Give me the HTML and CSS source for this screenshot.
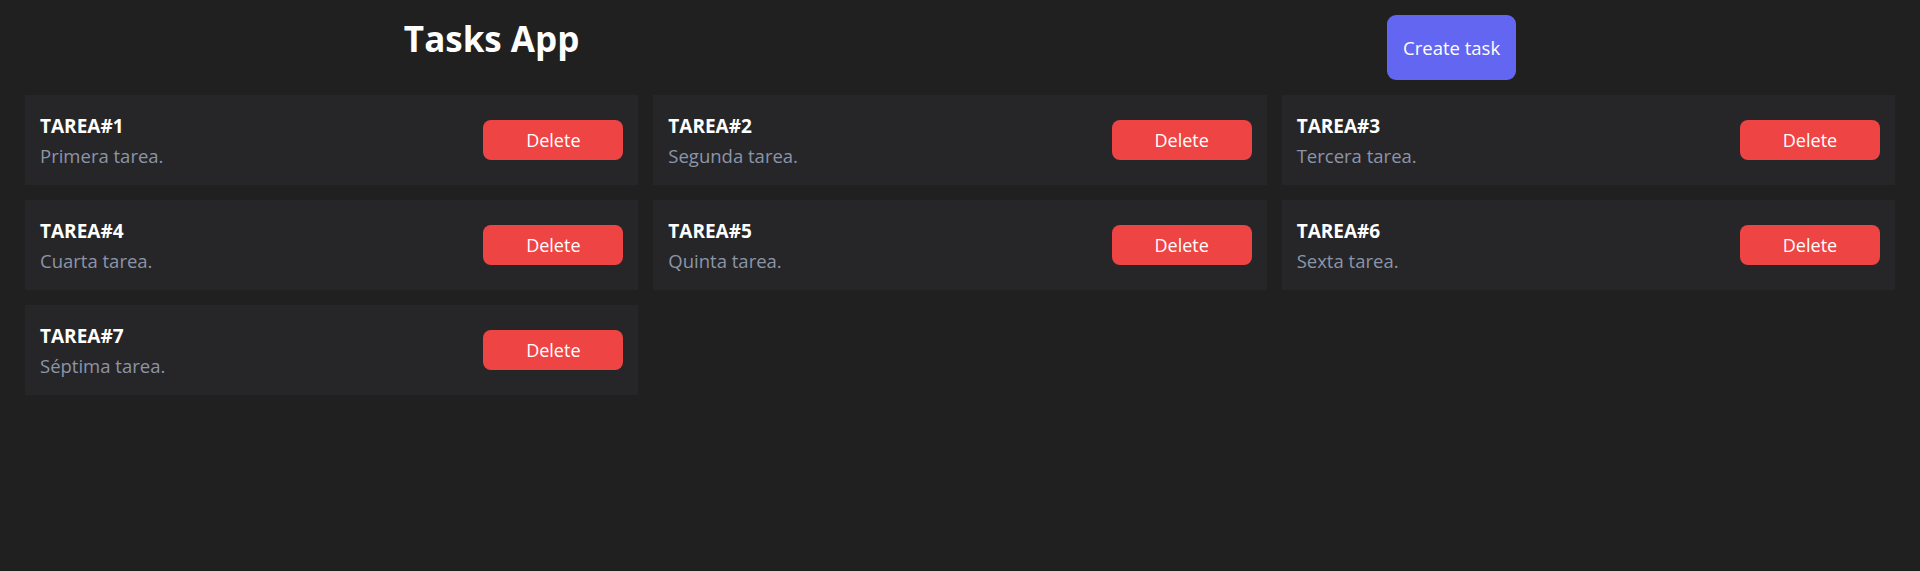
FILE: index.html
```html
<!DOCTYPE html>
<html lang="en">
<head>
  <meta charset="UTF-8">
  <meta name="viewport" content="width=device-width, initial-scale=1.0">
  <title>Tasks App</title>
  <link rel="stylesheet" href="styles.css">
</head>
<body>

  <header class="header">
    <h1 class="title">Tasks App</h1>
    <button class="btn-create">Create task</button>
  </header>

  <main class="task-grid">
    <div class="task-card">
      <div class="task-info">
        <h3 class="task-title">TAREA#1</h3>
        <p class="task-desc">Primera tarea.</p>
      </div>
      <button class="btn-delete">Delete</button>
    </div>
    <div class="task-card">
      <div class="task-info">
        <h3 class="task-title">TAREA#2</h3>
        <p class="task-desc">Segunda tarea.</p>
      </div>
      <button class="btn-delete">Delete</button>
    </div>
    <div class="task-card">
      <div class="task-info">
        <h3 class="task-title">TAREA#3</h3>
        <p class="task-desc">Tercera tarea.</p>
      </div>
      <button class="btn-delete">Delete</button>
    </div>
    <div class="task-card">
      <div class="task-info">
        <h3 class="task-title">TAREA#4</h3>
        <p class="task-desc">Cuarta tarea.</p>
      </div>
      <button class="btn-delete">Delete</button>
    </div>
    <div class="task-card">
      <div class="task-info">
        <h3 class="task-title">TAREA#5</h3>
        <p class="task-desc">Quinta tarea.</p>
      </div>
      <button class="btn-delete">Delete</button>
    </div>
    <div class="task-card">
      <div class="task-info">
        <h3 class="task-title">TAREA#6</h3>
        <p class="task-desc">Sexta tarea.</p>
      </div>
      <button class="btn-delete">Delete</button>
    </div>
    <div class="task-card">
      <div class="task-info">
        <h3 class="task-title">TAREA#7</h3>
        <p class="task-desc">Séptima tarea.</p>
      </div>
      <button class="btn-delete">Delete</button>
    </div>
  </main>

</body>
</html>
```

FILE: styles.css
```css
body {
  margin: 0;
  background-color: #202020;
  color: white;
  font-family: "Open Sans", "Noto Sans", sans-serif;
}

.header {
  display: flex;
  justify-content: space-around;
  align-items: flex-start;
  padding-top: 15px;
}

.title {
  margin: 0;
  margin-top: 2px;
  font-size: 35px;
  line-height: 44px;
  font-weight: 700;
}

.btn-create {
  height: 65px;
  padding: 0 16px;
  background-color: #6366f1;
  color: white;
  border: none;
  border-radius: 9px;
  font-family: inherit;
  font-size: 18.5px;
  cursor: pointer;
}

.task-grid {
  display: grid;
  grid-template-columns: repeat(3, 1fr);
  gap: 15px;
  padding: 15px 25px;
}

.task-card {
  display: flex;
  justify-content: space-between;
  align-items: center;
  height: 90px;
  box-sizing: border-box;
  padding: 16px 15px 14px;
  background-color: #262628;
}

.task-title {
  margin: 0;
  font-size: 19px;
  line-height: 30px;
  font-weight: 700;
}

.task-desc {
  margin: 0;
  font-size: 18.5px;
  line-height: 30px;
  color: #8c95a8;
}

.btn-delete {
  align-self: center;
  margin-top: -2px;
  width: 140px;
  height: 40px;
  background-color: #ef4444;
  color: white;
  border: none;
  border-radius: 8px;
  font-family: inherit;
  font-size: 18px;
  cursor: pointer;
}
```
